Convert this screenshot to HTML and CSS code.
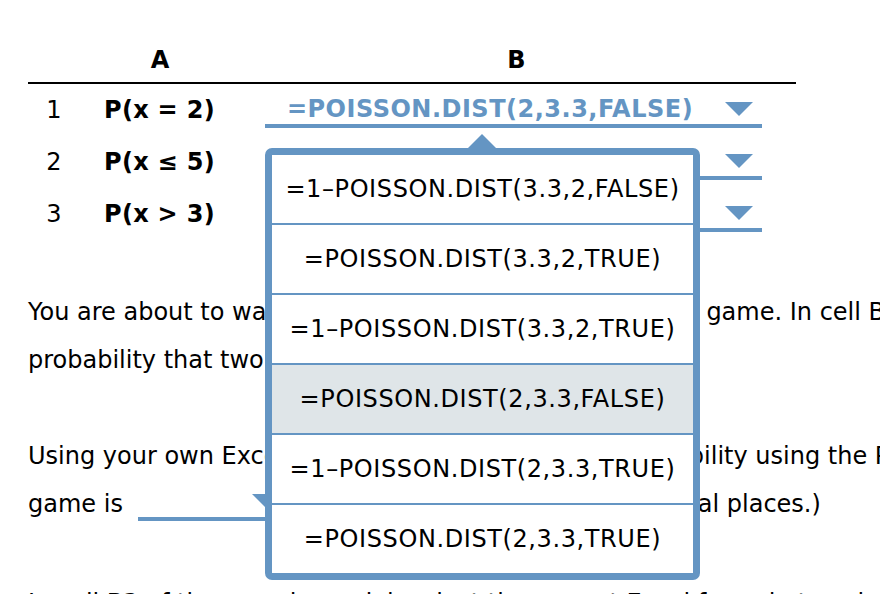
FILE: index.html
```html
<!DOCTYPE html>
<html lang="en">
<head>
<meta charset="utf-8">
<title>Poisson</title>
<link rel="stylesheet" href="styles.css">
</head>
<body>
<div class="page">
  <div class="sheet">
    <div class="sheet-row sheet-head">
      <div></div>
      <div class="col-head">A</div>
      <div></div>
      <div class="col-head col-head-b">B</div>
      <div></div>
    </div>
    <div class="sheet-row">
      <div class="row-num">1</div>
      <div class="row-label">P(x = 2)</div>
      <div></div>
      <div class="select">
        <span class="select-value">=POISSON.DIST(2,3.3,FALSE)</span>
        <span class="select-arrow"><span class="tri"></span></span>
      </div>
      <div></div>
    </div>
    <div class="sheet-row">
      <div class="row-num">2</div>
      <div class="row-label">P(x ≤ 5)</div>
      <div></div>
      <div class="select">
        <span class="select-value"></span>
        <span class="select-arrow"><span class="tri"></span></span>
      </div>
      <div></div>
    </div>
    <div class="sheet-row">
      <div class="row-num">3</div>
      <div class="row-label">P(x &gt; 3)</div>
      <div></div>
      <div class="select">
        <span class="select-value"></span>
        <span class="select-arrow"><span class="tri"></span></span>
      </div>
      <div></div>
    </div>
  </div>

  <div class="para">
    <span class="line">You are about to watch the Stanley Cup playoffs hockey game. In cell B1 of the spreadsheet, select the correct</span>
    <span class="line">probability that two goals are scored.</span>
  </div>
  <div class="para">
    <span class="line">Using your own Excel spreadsheet, calculate the probability using the Poisson distribution. The probability</span>
    <span class="line">game is <span class="inline-select"><span class="tri"></span></span> (Round your answer to four decimal places.)</span>
  </div>
  <div class="para para-last">
    <span class="line">In cell B3 of the sample model, select the correct Excel formula to calculate</span>
  </div>

  <div class="popover">
    <span class="popover-caret"></span>
    <ul class="options">
      <li class="option">=1–POISSON.DIST(3.3,2,FALSE)</li>
      <li class="option">=POISSON.DIST(3.3,2,TRUE)</li>
      <li class="option">=1–POISSON.DIST(3.3,2,TRUE)</li>
      <li class="option is-active">=POISSON.DIST(2,3.3,FALSE)</li>
      <li class="option">=1–POISSON.DIST(2,3.3,TRUE)</li>
      <li class="option">=POISSON.DIST(2,3.3,TRUE)</li>
    </ul>
  </div>
</div>
</body>
</html>
```

FILE: styles.css
```css
html, body {
  margin: 0;
  padding: 0;
  background: #fff;
  overflow: hidden;
}

body {
  font-family: "DejaVu Sans", Verdana, sans-serif;
  font-size: 24px;
  color: #000;
}

.page {
  position: relative;
  width: 1400px;
  padding: 30px 0 0 28px;
}

.sheet {
  width: 768px;
}

.sheet-row {
  display: grid;
  grid-template-columns: 52px 160px 25px 497px 34px;
  height: 52px;
  align-items: center;
}

.sheet-head {
  box-sizing: border-box;
  padding-top: 8px;
  border-bottom: 2px solid #000;
  height: 54px;
}

.col-head {
  font-weight: bold;
  text-align: center;
}

.col-head-b {
  padding-left: 6px;
}

.row-num {
  text-align: center;
}

.row-label {
  font-weight: bold;
  padding-left: 24px;
  letter-spacing: 0.3px;
}

.select {
  align-self: end;
  margin-bottom: 8px;
  height: 34px;
  box-sizing: border-box;
  border-bottom: 4px solid #6495c3;
  display: flex;
  align-items: center;
}

.select-value {
  flex: 1;
  text-align: center;
  font-weight: bold;
  color: #6495c3;
  white-space: nowrap;
  letter-spacing: 0.5px;
}

.select-arrow {
  width: 47px;
  display: flex;
  justify-content: center;
}

.tri {
  display: block;
  width: 0;
  height: 0;
  border-left: 14px solid transparent;
  border-right: 14px solid transparent;
  border-top: 14px solid #6495c3;
}

.para {
  margin-top: 48px;
  line-height: 48px;
}

.para-last {
  margin-top: 51px;
}

.line {
  display: block;
  white-space: nowrap;
}

.inline-select {
  display: inline-block;
  width: 143px;
  height: 34px;
  box-sizing: border-box;
  padding: 7px 1px 0 0;
  border-bottom: 4px solid #6495c3;
  margin-left: 7px;
  overflow: hidden;
  vertical-align: -9px;
}

.inline-select .tri {
  margin-left: auto;
}

.popover {
  position: absolute;
  left: 265px;
  top: 148px;
  width: 435px;
  box-sizing: border-box;
  border: 7px solid #6495c3;
  border-radius: 7px;
  background: #fff;
}

.popover-caret {
  position: absolute;
  top: -21px;
  left: 196px;
  width: 0;
  height: 0;
  border-left: 14px solid transparent;
  border-right: 14px solid transparent;
  border-bottom: 14px solid #6495c3;
}

.options {
  list-style: none;
  margin: 0;
  padding: 0;
}

.option {
  height: 68px;
  line-height: 68px;
  text-align: center;
  white-space: nowrap;
  letter-spacing: 0.6px;
  border-bottom: 2px solid #6495c3;
}

.option:last-child {
  border-bottom: none;
}

.option.is-active {
  background: #dfe5e8;
}
```
